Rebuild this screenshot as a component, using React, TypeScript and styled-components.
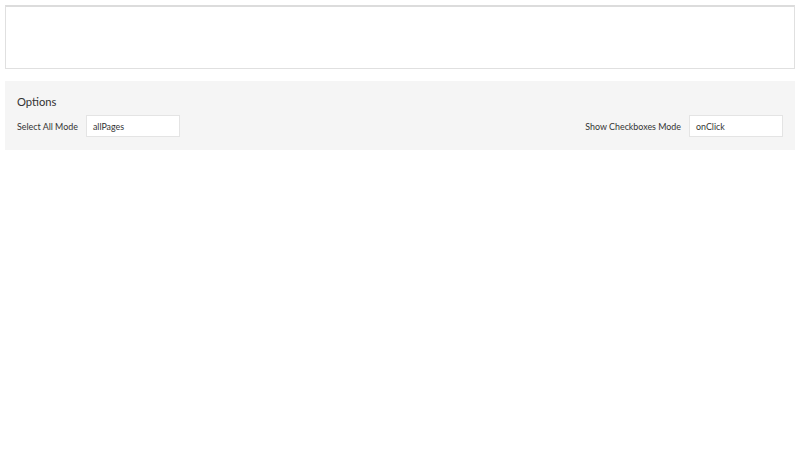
import React from 'react'
import styled, { createGlobalStyle } from 'styled-components'

const GlobalStyle = createGlobalStyle`
body{
  margin:5px;
  font-family:Lato,"Open Sans",sans-serif;
  color:#333;
  background:#fff;
}
`

const Grid = styled.div`
height:61px;
border:1px solid #e0e0e0;
border-top:2px solid #dcdcdc;
background:#fff;
`

const Options = styled.div`
margin-top:12px;
padding:12px 12px 13px 12px;
background:#f5f5f5;
`

const Caption = styled.div`
font-size:11.2px;
line-height:18px;
margin-bottom:4px;
color:#333;
`

const Row = styled.div`
display:flex;
justify-content:space-between;
align-items:center;
`

const Option = styled.div`
display:flex;
align-items:center;
gap:8px;
`

const Label = styled.span`
font-size:8.9px;
color:#333;
`

const SelectBox = styled.div`
width:86px;
height:20px;
border:1px solid #e4e4e4;
background:#fff;
display:flex;
align-items:center;
padding-left:6px;
box-sizing:content-box;
font-size:8.9px;
color:#333;
`

const App = (): JSX.Element => {
  return (
    <>
      <GlobalStyle />
      <Grid />
      <Options>
        <Caption>Options</Caption>
        <Row>
          <Option>
            <Label>Select All Mode</Label>
            <SelectBox>allPages</SelectBox>
          </Option>
          <Option>
            <Label>Show Checkboxes Mode</Label>
            <SelectBox>onClick</SelectBox>
          </Option>
        </Row>
      </Options>
    </>
  )
}

export default App
